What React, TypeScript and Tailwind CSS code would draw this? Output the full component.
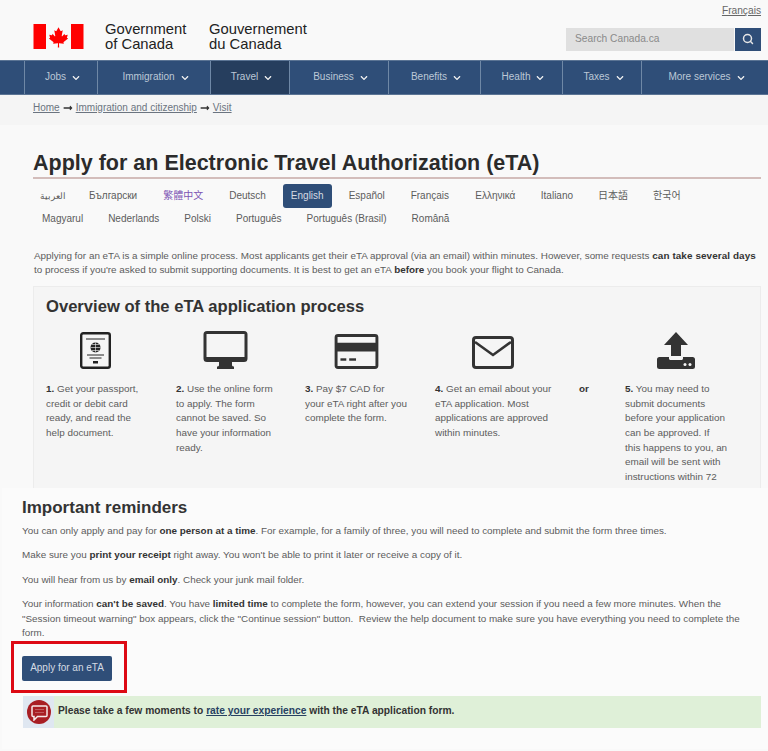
import { Search } from "lucide-react";
import { FaChevronDown, FaLongArrowAltRight } from "react-icons/fa";

const navItems = [
  { label: "Jobs", width: "w-[73px]" },
  { label: "Immigration", width: "w-[113px]" },
  { label: "Travel", width: "w-[79px]", active: true },
  { label: "Business", width: "w-[99px]" },
  { label: "Benefits", width: "w-[92px]" },
  { label: "Health", width: "w-[82px]" },
  { label: "Taxes", width: "w-[79px]" },
  { label: "More services", width: "w-[127px]" },
];

const langRowOne = ["العربية", "Български", "繁體中文", "Deutsch", "English", "Español", "Français", "Ελληνικά", "Italiano", "日本語", "한국어"];
const langRowTwo = ["Magyarul", "Nederlands", "Polski", "Português", "Português (Brasil)", "Română"];

// a few labels render narrower here than in the original page
const langWidths: Record<string, string> = {
  "العربية": "w-[38px] text-[8.5px]",
  "繁體中文": "w-[58px]",
  "Français": "w-[56px]",
  "Ελληνικά": "w-[57px]",
};

function LangLink({ label }: { label: string }) {
  const active = label === "English";
  const visited = label === "繁體中文";
  return (
    <span
      className={`h-[24px] px-2 flex items-center justify-center whitespace-nowrap rounded-[3px] ${langWidths[label] ?? ""} ${
        active ? "bg-[#2f4e78] text-[#d5dbe3]" : visited ? "text-[#7d55b5]" : "text-[#5c5c5c]"
      }`}
    >
      {label}
    </span>
  );
}

function Flag() {
  return (
    <svg width="51" height="25" viewBox="0 0 52 26">
      <rect x="0" y="0" width="13" height="26" fill="#f00" />
      <rect x="39" y="0" width="13" height="26" fill="#f00" />
      <path
        d="M26 3.500l-2 3.600c-.2.400-.6.400-1 .2l-1.400-.8 1 5.400c.2 1-.5 1-.8.600l-2-2.300-.4 1.200c0 .2-.2.300-.4.300l-2.600-.5.7 2.500c.1.500.3.700-.2.900l-.9.400 4.600 3.700c.2.100.3.400.2.600l-.4 1.300 4.700-.5c.1 0 .4.100.4.300l-.2 4h1.400l-.2-4c0-.2.300-.300.4-.300l4.700.5-.4-1.300c-.1-.2 0-.5.2-.6l4.600-3.700-.9-.4c-.5-.2-.3-.4-.2-.9l.7-2.500-2.600.5c-.2 0-.4-.1-.4-.3l-.4-1.200-2 2.300c-.3.400-1 .4-.8-.6l1-5.400-1.400.8c-.4.200-.8.200-1-.2z"
        fill="#f00"
      />
    </svg>
  );
}

function PassportIcon() {
  return (
    <svg width="31" height="37" viewBox="0 0 31 37" className="text-[#222]">
      <rect x="1.200" y="1.200" width="28.600" height="34.600" rx="2" fill="none" stroke="currentColor" strokeWidth="2.400" />
      <path d="M6 7h19M7 23h17M9.500 26h12" stroke="currentColor" strokeWidth="1" />
      <circle cx="15.500" cy="15.500" r="5" fill="currentColor" />
      <path d="M10.500 15.500h10M15.500 10.500v10M12 12.500h7M12 18.500h7" stroke="#f5f5f5" strokeWidth="0.600" />
      <rect x="13" y="29" width="5" height="2.500" fill="currentColor" />
    </svg>
  );
}

function MonitorIcon() {
  return (
    <svg width="45" height="38" viewBox="0 0 45 38" className="text-[#333]">
      <path
        d="M4 0h37a3.500 3.500 0 0 1 3.500 3.500v24a3.500 3.500 0 0 1-3.500 3.500H29v3c0 1 1 1.500 2 1.500v2.500H14v-2.500c1 0 2-.5 2-1.500v-3H4a3.500 3.500 0 0 1-3.500-3.500v-24A3.500 3.500 0 0 1 4 0zm-.5 3v23h38V3z"
        fill="currentColor"
        fillRule="evenodd"
      />
    </svg>
  );
}

function CardIcon() {
  return (
    <svg width="45" height="35" viewBox="0 0 45 36" className="text-[#333]">
      <path
        d="M3.500 0h38A3.500 3.500 0 0 1 45 3.500v29a3.500 3.500 0 0 1-3.500 3.500h-38A3.500 3.500 0 0 1 0 32.500v-29A3.500 3.500 0 0 1 3.500 0zM3 3v6h39V3zm0 15v15h39V18z"
        fill="currentColor"
        fillRule="evenodd"
      />
      <rect x="6" y="25" width="6" height="2.500" fill="currentColor" />
      <rect x="15" y="25" width="7" height="2.500" fill="currentColor" />
    </svg>
  );
}

function EnvelopeIcon() {
  return (
    <svg width="42" height="33" viewBox="0 0 42 33" className="text-[#333]">
      <rect x="1.500" y="1.500" width="39" height="30" rx="2.500" fill="none" stroke="currentColor" strokeWidth="3" />
      <path d="M3 6l18 13L39 6" fill="none" stroke="currentColor" strokeWidth="2.600" />
    </svg>
  );
}

function UploadIcon() {
  return (
    <svg width="38" height="37" viewBox="0 0 38 37" className="text-[#333]">
      <path d="M19 0l12 13h-7v11h-10V13H7z" fill="currentColor" />
      <path
        d="M2.500 25H12v1.500c0 .8.700 1.500 1.500 1.500h11c.8 0 1.500-.7 1.500-1.500V25h9.500a2.500 2.500 0 0 1 2.500 2.500v7a2.500 2.500 0 0 1-2.500 2.500h-33A2.500 2.500 0 0 1 0 34.500v-7A2.500 2.500 0 0 1 2.500 25z"
        fill="currentColor"
      />
      <circle cx="28" cy="32.500" r="1.500" fill="#f5f5f5" />
      <circle cx="33" cy="32.500" r="1.500" fill="#f5f5f5" />
    </svg>
  );
}

function BubbleIcon() {
  return (
    <svg width="17" height="16" viewBox="0 0 17 16" fill="none" stroke="#f5e9e9">
      <path d="M2 1h13a1 1 0 0 1 1 1v8.500a1 1 0 0 1-1 1H6.500L3 15v-3.500H2a1 1 0 0 1-1-1V2a1 1 0 0 1 1-1z" strokeWidth="1.500" />
      <path d="M4 4.500h9M4 7.500h9" strokeWidth="0.600" opacity="0.500" />
    </svg>
  );
}

function Step({ icon, width, textWidth, num, text }: { icon: React.ReactNode; width: string; textWidth: string; num: string; text: string }) {
  return (
    <div className={`${width} shrink-0`}>
      <div className={`${textWidth} h-[41px] pr-[2px] flex items-end justify-center`}>{icon}</div>
      <p className={`${textWidth} mt-[13px] whitespace-pre-line`}>
        <b className="text-[#333]">{num}</b> {text}
      </p>
    </div>
  );
}

export default function App() {
  return (
    <div className="min-h-[751px] bg-[#f9f9f9] font-['Liberation_Sans','Noto_Sans_CJK_SC',sans-serif] text-[9.9px] leading-[14.7px] text-[#5c5c5c] overflow-hidden">
      <header className="h-[60px] flex justify-between pl-[33px] pr-[7px]">
        <div className="flex items-start pt-[24px]">
          <Flag />
          <div className="ml-[21px] -mt-[2px] text-[14.8px] leading-[15px] text-[#222] flex">
            <div className="w-[104px]">
              Government
              <br />
              of Canada
            </div>
            <div>
              Gouvernement
              <br />
              du Canada
            </div>
          </div>
        </div>
        <div className="flex flex-col items-end pt-[4px]">
          <a className="text-[10.2px] underline text-[#666]">Français</a>
          <div className="mt-[9px] flex">
            <div className="w-[168px] h-[23px] bg-[#e0e0e0] pl-[9px] flex items-center text-[10.2px] text-[#8a8a8a]">Search Canada.ca</div>
            <button className="w-[26px] h-[23px] ml-[1px] bg-[#2f4e78] flex items-center justify-center text-[#e6e6e6]">
              <Search size={12} strokeWidth={3} />
            </button>
          </div>
        </div>
      </header>

      <nav className="h-[35px] bg-[#2f4e78] border-t border-b border-[#5b7494] pl-[24px] flex text-[10px]">
        {navItems.map((item) => (
          <div
            key={item.label}
            className={`${item.width} shrink-0 border-l border-[#6f88a6] pl-[3px] flex items-center justify-center gap-[6px] text-[#bcc8d6] ${
              item.active ? "bg-[#263e5e]" : ""
            }`}
          >
            {item.label}
            <FaChevronDown size={8} className="text-[#f2f2f2]" />
          </div>
        ))}
      </nav>

      <div className="h-[30px] bg-[#f5f5f5] pl-[33px] pb-[4px] flex items-center gap-[3px] text-[10px] text-[#6b7480]">
        <a className="underline">Home</a>
        <FaLongArrowAltRight size={10} className="text-[#333]" />
        <a className="underline">Immigration and citizenship</a>
        <FaLongArrowAltRight size={10} className="text-[#333]" />
        <a className="underline">Visit</a>
      </div>

      <main className="pl-[33px] pr-[7px]">
        <h1 className="mt-[25px] text-[21.500px] leading-[27px] font-bold text-[#2b2b2b] border-b-2 border-[#d3bdbb]">
          Apply for an Electronic Travel Authorization (eTA)
        </h1>
        <div className="mt-[5px] pl-[1px] flex gap-[9px] text-[10px]">
          {langRowOne.map((l) => (
            <LangLink key={l} label={l} />
          ))}
        </div>
        <div className="-mt-[1px] pl-[1px] flex gap-[9px] text-[10px]">
          {langRowTwo.map((l) => (
            <LangLink key={l} label={l} />
          ))}
        </div>
        <p className="mt-[18px] pl-[1px] -mr-[4px] leading-[14.400px]">
          Applying for an eTA is a simple online process. Most applicants get their eTA approval (via an email) within minutes. However, some requests{" "}
          <b className="text-[#333] tracking-[0.1px]">can take several days</b> to process if you're asked to submit supporting documents. It is best to get an eTA{" "}
          <b className="text-[#333]">before</b> you book your flight to Canada.
        </p>

        <section className="mt-[8px] h-[202px] overflow-hidden bg-[#f5f5f5] border-t border-x border-[#ececec] pl-[12px] pt-[10px]">
          <h2 className="text-[16.600px] leading-[20px] font-bold text-[#333]">Overview of the eTA application process</h2>
          <div className="mt-[11px] flex">
            <Step icon={<PassportIcon />} width="w-[130px]" textWidth="w-[100px]" num="1." text={"Get your passport,\ncredit or debit card\nready, and read the\nhelp document."} />
            <Step icon={<MonitorIcon />} width="w-[129px]" textWidth="w-[100px]" num="2." text={"Use the online form\nto apply. The form\ncannot be saved. So\nhave your information\nready."} />
            <Step icon={<CardIcon />} width="w-[130px]" textWidth="w-[104px]" num="3." text={"Pay $7 CAD for\nyour eTA right after you\ncomplete the form."} />
            <Step icon={<EnvelopeIcon />} width="w-[144px]" textWidth="w-[118px]" num="4." text={"Get an email about your\neTA application. Most\napplications are approved\nwithin minutes."} />
            <div className="w-[46px] shrink-0 pt-[54px] font-bold text-[#333]">or</div>
            <Step icon={<UploadIcon />} width="w-[110px]" textWidth="w-[103px]" num="5." text={"You may need to\nsubmit documents\nbefore your application\ncan be approved. If\nthis happens to you, an\nemail will be sent with\ninstructions within 72"} />
          </div>
        </section>
      </main>

      <section className="ml-[2px] bg-[#fbfbfb] pl-[20px] pr-[7px] pt-[10px] pb-[21px]">
        <h2 className="text-[17px] leading-[20px] font-bold text-[#333]">Important reminders</h2>
        <p className="mt-[6px]">
          You can only apply and pay for <b className="text-[#333]">one person at a time</b>. For example, for a family of three, you will need to complete and submit the form three times.
        </p>
        <p className="mt-[9.500px]">
          Make sure you <b className="text-[#333]">print your receipt</b> right away. You won't be able to print it later or receive a copy of it.
        </p>
        <p className="mt-[9.800px]">
          You will hear from us by <b className="text-[#333]">email only</b>. Check your junk mail folder.
        </p>
        <p className="mt-[9.800px]">
          Your information <b className="text-[#333]">can't be saved</b>. You have <b className="text-[#333]">limited time</b> to complete the form, however, you can extend your session if you need a few more minutes. When the "Session timeout warning" box appears, click the "Continue session" button.&nbsp; Review the help document to make sure you have everything you need to complete the form.
        </p>
        <div className="-ml-[11px] w-[116px] h-[52px] border-[3px] border-[#dd0a14] pl-[8px] pt-[11px]">
          <button className="w-[90px] h-[25px] rounded-[2px] bg-[#2f4e78] text-[#d5dbe3] text-[10px] translate-y-[1px]">Apply for an eTA</button>
        </div>
        <div className="mt-[3px] ml-[1px] h-[32px] flex bg-[#dff0d8]">
          <div className="w-[31px] bg-[#dfe7f1] shrink-0 flex items-center justify-center">
            <div className="w-[24px] h-[24px] ml-[1px] rounded-full bg-[#a81e24] flex items-center justify-center pt-[2px]">
              <BubbleIcon />
            </div>
          </div>
          <p className="ml-[4px] pb-[1px] flex items-center font-bold text-[10.250px] text-[#333] whitespace-pre">
            Please take a few moments to <a className="underline text-[#284162]">rate your experience</a> with the eTA application form.
          </p>
        </div>
      </section>
    </div>
  );
}
